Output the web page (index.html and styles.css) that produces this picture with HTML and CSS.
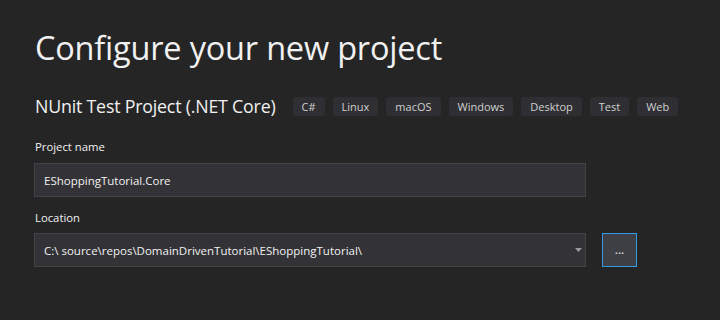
FILE: index.html
```html
<!DOCTYPE html>
<html>
<head>
<meta charset="utf-8">
<link rel="stylesheet" href="styles.css">
</head>
<body>
<main class="page">
  <h1 class="title">Configure your new project</h1>
  <div class="template-row">
    <span class="template-name">NUnit Test Project (.NET Core)</span>
    <ul class="tags">
      <li class="tag">C#</li>
      <li class="tag">Linux</li>
      <li class="tag">macOS</li>
      <li class="tag">Windows</li>
      <li class="tag">Desktop</li>
      <li class="tag">Test</li>
      <li class="tag">Web</li>
    </ul>
  </div>
  <label class="field-label">Project name</label>
  <div class="input">EShoppingTutorial.Core</div>
  <label class="field-label field-label-2">Location</label>
  <div class="location-row">
    <div class="input combo">
      <span>C:\ source\repos\DomainDrivenTutorial\EShoppingTutorial\</span>
      <svg class="arrow" width="7" height="4" viewBox="0 0 7 4"><path d="M0 0H7L3.5 4Z" fill="#999"/></svg>
    </div>
    <div class="browse">...</div>
  </div>
</main>
</body>
</html>
```

FILE: styles.css
```css
html, body {
  margin: 0;
  padding: 0;
  background: #252526;
  width: 720px;
  height: 320px;
  overflow: hidden;
}
.page {
  padding: 26px 0 0 35px;
  font-family: "Open Sans", "Noto Sans", sans-serif;
  color: #f1f1f1;
}
.title {
  margin: 0;
  font-weight: 400;
  font-size: 32.5px;
  line-height: 44px;
  letter-spacing: -0.2px;
}
.template-row {
  display: flex;
  align-items: center;
  margin-top: 23px;
  height: 26px;
}
.template-name {
  font-size: 17.8px;
  letter-spacing: -0.2px;
  color: #f1f1f1;
}
.tags {
  display: flex;
  gap: 8px;
  list-style: none;
  margin: 0 0 0 17px;
  padding: 0;
}
.tag {
  background: #2f2f33;
  color: #d0d0d0;
  font-size: 11px;
  height: 19px;
  line-height: 19px;
  padding: 0 9px;
  border-radius: 3px;
}
.field-label {
  display: block;
  font-size: 11.3px;
  color: #f1f1f1;
  margin-top: 19px;
  line-height: 18px;
}
.field-label-2 {
  margin-top: 12px;
}
.input {
  box-sizing: border-box;
  width: 552px;
  height: 34px;
  margin-left: -1px;
  margin-top: 7px;
  background: #333337;
  border: 1px solid #434346;
  font-size: 11.5px;
  color: #f1f1f1;
  padding: 0 9px;
  display: flex;
  align-items: center;
}
.location-row {
  display: flex;
  align-items: flex-start;
  gap: 16px;
  margin-top: 6px;
}
.location-row .input {
  margin-top: 0;
}
.combo {
  justify-content: space-between;
  padding-right: 2px;
}
.arrow {
  margin-right: 1px;
}
.browse {
  box-sizing: border-box;
  width: 35px;
  height: 34px;
  background: #3f3f46;
  border: 1px solid #3399e0;
  color: #f1f1f1;
  font-size: 12px;
  display: flex;
  align-items: center;
  justify-content: center;
  padding-bottom: 2px;
}
```
